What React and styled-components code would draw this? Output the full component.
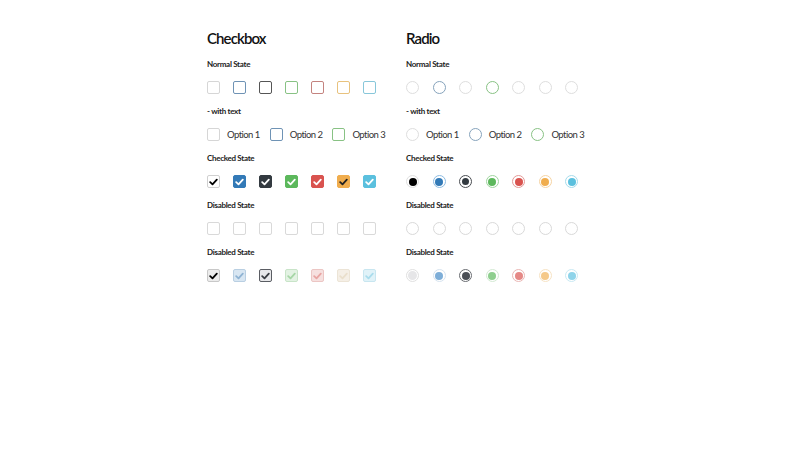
import React from "react";
import styled, { createGlobalStyle } from "styled-components";

const Global = createGlobalStyle`
  html, body { margin: 0; padding: 0; background: #fff; }
  body { font-family: Lato, "Open Sans", sans-serif; color: #222; }
`;

const Page = styled.div`
  display: flex;
  padding: 28px 0 0 207px;
`;

const Column = styled.section`
  width: 199px;
  flex: none;
  display: flex;
  flex-direction: column;
`;

const Heading = styled.h2`
  margin: 0 0 9px;
  font-size: 15px;
  line-height: 20px;
  font-weight: 600;
  letter-spacing: -0.9px;
  color: #111;
`;

const Label = styled.div`
  font-size: 8px;
  line-height: 14px;
  font-weight: 700;
  letter-spacing: -0.3px;
  color: #222;
  margin-bottom: 10px;
`;

const Row = styled.div`
  display: flex;
  align-items: center;
  height: 13px;
  gap: ${(p) => p.$gap}px;
  margin-bottom: 10px;
  white-space: nowrap;
`;

const Option = styled.label`
  display: flex;
  flex: none;
  align-items: center;
  gap: 7px;
  margin-right: 10px;
  font-size: 9.5px;
  letter-spacing: -0.55px;
  color: #333;
  white-space: nowrap;
`;

const Box = styled.span`
  box-sizing: border-box;
  width: 13px;
  height: 13px;
  border-radius: 2px;
  border: 1px solid ${(p) => p.$border};
  background: ${(p) => p.$bg || "#fff"};
  display: flex;
  align-items: center;
  justify-content: center;
  flex: none;
`;

const Circle = styled.span`
  box-sizing: border-box;
  width: 13px;
  height: 13px;
  border-radius: 50%;
  border: 1px solid ${(p) => p.$border};
  background: #fff;
  display: flex;
  align-items: center;
  justify-content: center;
  flex: none;
`;

const Dot = styled.span`
  width: ${(p) => p.$size}px;
  height: ${(p) => p.$size}px;
  border-radius: 50%;
  background: ${(p) => p.$color};
`;

const Check = ({ color }) => (
  <svg width="9" height="8" viewBox="0 0 9 8">
    <polyline points="1.2,4.2 3.5,6.3 7.8,1.6" fill="none" stroke={color} strokeWidth="1.8" strokeLinecap="round" strokeLinejoin="round" />
  </svg>
);

const normalBox = ["#d6d6d6", "#6f93b5", "#555555", "#88c284", "#c4837f", "#e8c27e", "#88c7da"];
const normalRadio = ["#dedede", "#86a3bc", "#dedede", "#88c284", "#dedede", "#dedede", "#dedede"];

const checkedBox = [
  { bg: "#fff", border: "#d0d0d0", check: "#000" },
  { bg: "#337ab7", border: "#337ab7", check: "#fff" },
  { bg: "#333a40", border: "#333a40", check: "#fff" },
  { bg: "#5cb85c", border: "#5cb85c", check: "#fff" },
  { bg: "#d9534f", border: "#d9534f", check: "#fff" },
  { bg: "#f0ad4e", border: "#f0ad4e", check: "#222" },
  { bg: "#5bc0de", border: "#5bc0de", check: "#fff" },
];

const disabledChecked = [
  { bg: "#ececec", border: "#c8c8c8", check: "#000" },
  { bg: "#d8e6f2", border: "#b9cfe2", check: "#8fb3d3" },
  { bg: "#e8e8ea", border: "#5a5d63", check: "#3a3d42" },
  { bg: "#e3f2e3", border: "#c8e4c8", check: "#a6d6a6" },
  { bg: "#f6e0df", border: "#ecc6c4", check: "#e8a5a3" },
  { bg: "#f5efe6", border: "#ece4d6", check: "#eadfcc" },
  { bg: "#e0f2f8", border: "#c8e6f0", check: "#a9dcec" },
];

const checkedRadio = [
  { border: "#e0e0e0", dot: "#000", size: 8 },
  { border: "#8ebde3", dot: "#337ab7", size: 8 },
  { border: "#4a4d52", dot: "#333a40", size: 7 },
  { border: "#9fd49f", dot: "#5cb85c", size: 8 },
  { border: "#e49a97", dot: "#d9534f", size: 8 },
  { border: "#f6d4a4", dot: "#f0ad4e", size: 8 },
  { border: "#a6dcec", dot: "#5bc0de", size: 8 },
];

const disabledRadio = [
  { border: "#e0e0e0", dot: "#e6e6e8", size: 9 },
  { border: "#d6e3ef", dot: "#7eaed8", size: 8 },
  { border: "#6a6d72", dot: "#4b4f56", size: 8 },
  { border: "#d3ead3", dot: "#8fcf8f", size: 8 },
  { border: "#eab7b5", dot: "#e58986", size: 8 },
  { border: "#f7e3c4", dot: "#f5c98a", size: 8 },
  { border: "#c9e9f3", dot: "#8fd4ea", size: 8 },
];

const options = ["Option 1", "Option 2", "Option 3"];
const optionBox = ["#d6d6d6", "#6f93b5", "#88c284"];
const optionRadio = ["#dedede", "#86a3bc", "#88c284"];

function CheckboxColumn() {
  return (
    <Column>
      <Heading>Checkbox</Heading>
      <Label>Normal State</Label>
      <Row $gap={13}>
        {normalBox.map((c, i) => <Box key={i} $border={c} />)}
      </Row>
      <Label>- with text</Label>
      <Row $gap={0}>
        {options.map((o, i) => (
          <Option key={o}>
            <Box $border={optionBox[i]} />
            {o}
          </Option>
        ))}
      </Row>
      <Label>Checked State</Label>
      <Row $gap={13}>
        {checkedBox.map((c, i) => (
          <Box key={i} $border={c.border} $bg={c.bg}><Check color={c.check} /></Box>
        ))}
      </Row>
      <Label>Disabled State</Label>
      <Row $gap={13}>
        {normalBox.map((c, i) => <Box key={i} $border="#d9d9d9" />)}
      </Row>
      <Label>Disabled State</Label>
      <Row $gap={13}>
        {disabledChecked.map((c, i) => (
          <Box key={i} $border={c.border} $bg={c.bg}><Check color={c.check} /></Box>
        ))}
      </Row>
    </Column>
  );
}

function RadioColumn() {
  return (
    <Column>
      <Heading>Radio</Heading>
      <Label>Normal State</Label>
      <Row $gap={13.5}>
        {normalRadio.map((c, i) => <Circle key={i} $border={c} />)}
      </Row>
      <Label>- with text</Label>
      <Row $gap={0}>
        {options.map((o, i) => (
          <Option key={o}>
            <Circle $border={optionRadio[i]} />
            {o}
          </Option>
        ))}
      </Row>
      <Label>Checked State</Label>
      <Row $gap={13.5}>
        {checkedRadio.map((c, i) => (
          <Circle key={i} $border={c.border}><Dot $color={c.dot} $size={c.size} /></Circle>
        ))}
      </Row>
      <Label>Disabled State</Label>
      <Row $gap={13.5}>
        {normalRadio.map((c, i) => <Circle key={i} $border="#d9d9d9" />)}
      </Row>
      <Label>Disabled State</Label>
      <Row $gap={13.5}>
        {disabledRadio.map((c, i) => (
          <Circle key={i} $border={c.border}><Dot $color={c.dot} $size={c.size} /></Circle>
        ))}
      </Row>
    </Column>
  );
}

export default function App() {
  return (
    <>
      <Global />
      <Page>
        <CheckboxColumn />
        <RadioColumn />
      </Page>
    </>
  );
}
